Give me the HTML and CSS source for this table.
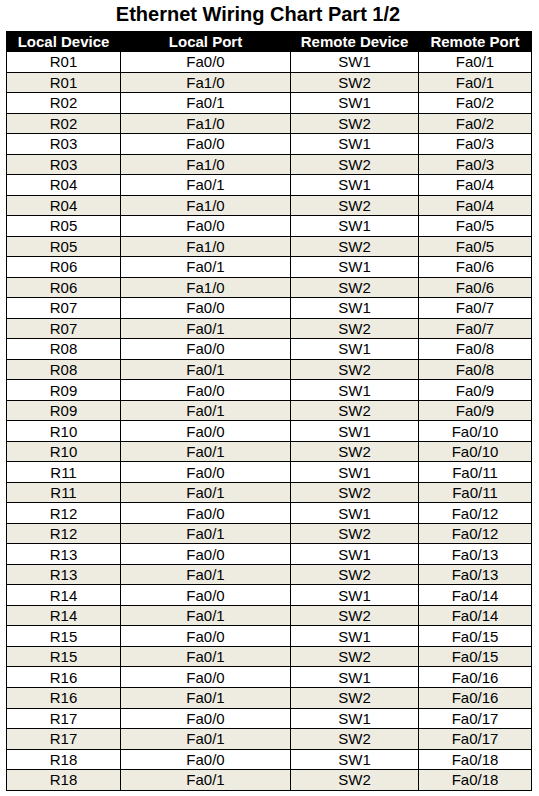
FILE: index.html
```html
<!DOCTYPE html>
<html>
<head>
<meta charset="utf-8">
<title>Ethernet Wiring Chart Part 1/2</title>
<link rel="stylesheet" href="styles.css">
</head>
<body>
<h1 class="title">Ethernet Wiring Chart Part 1/2</h1>
<table class="chart">
<colgroup><col class="c1"><col class="c2"><col class="c3"><col class="c4"></colgroup>
<thead>
<tr><th>Local Device</th><th>Local Port</th><th>Remote Device</th><th>Remote Port</th></tr>
</thead>
<tbody>
<tr><td>R01</td><td>Fa0/0</td><td>SW1</td><td>Fa0/1</td></tr>
<tr><td>R01</td><td>Fa1/0</td><td>SW2</td><td>Fa0/1</td></tr>
<tr><td>R02</td><td>Fa0/1</td><td>SW1</td><td>Fa0/2</td></tr>
<tr><td>R02</td><td>Fa1/0</td><td>SW2</td><td>Fa0/2</td></tr>
<tr><td>R03</td><td>Fa0/0</td><td>SW1</td><td>Fa0/3</td></tr>
<tr><td>R03</td><td>Fa1/0</td><td>SW2</td><td>Fa0/3</td></tr>
<tr><td>R04</td><td>Fa0/1</td><td>SW1</td><td>Fa0/4</td></tr>
<tr><td>R04</td><td>Fa1/0</td><td>SW2</td><td>Fa0/4</td></tr>
<tr><td>R05</td><td>Fa0/0</td><td>SW1</td><td>Fa0/5</td></tr>
<tr><td>R05</td><td>Fa1/0</td><td>SW2</td><td>Fa0/5</td></tr>
<tr><td>R06</td><td>Fa0/1</td><td>SW1</td><td>Fa0/6</td></tr>
<tr><td>R06</td><td>Fa1/0</td><td>SW2</td><td>Fa0/6</td></tr>
<tr><td>R07</td><td>Fa0/0</td><td>SW1</td><td>Fa0/7</td></tr>
<tr><td>R07</td><td>Fa0/1</td><td>SW2</td><td>Fa0/7</td></tr>
<tr><td>R08</td><td>Fa0/0</td><td>SW1</td><td>Fa0/8</td></tr>
<tr><td>R08</td><td>Fa0/1</td><td>SW2</td><td>Fa0/8</td></tr>
<tr><td>R09</td><td>Fa0/0</td><td>SW1</td><td>Fa0/9</td></tr>
<tr><td>R09</td><td>Fa0/1</td><td>SW2</td><td>Fa0/9</td></tr>
<tr><td>R10</td><td>Fa0/0</td><td>SW1</td><td>Fa0/10</td></tr>
<tr><td>R10</td><td>Fa0/1</td><td>SW2</td><td>Fa0/10</td></tr>
<tr><td>R11</td><td>Fa0/0</td><td>SW1</td><td>Fa0/11</td></tr>
<tr><td>R11</td><td>Fa0/1</td><td>SW2</td><td>Fa0/11</td></tr>
<tr><td>R12</td><td>Fa0/0</td><td>SW1</td><td>Fa0/12</td></tr>
<tr><td>R12</td><td>Fa0/1</td><td>SW2</td><td>Fa0/12</td></tr>
<tr><td>R13</td><td>Fa0/0</td><td>SW1</td><td>Fa0/13</td></tr>
<tr><td>R13</td><td>Fa0/1</td><td>SW2</td><td>Fa0/13</td></tr>
<tr><td>R14</td><td>Fa0/0</td><td>SW1</td><td>Fa0/14</td></tr>
<tr><td>R14</td><td>Fa0/1</td><td>SW2</td><td>Fa0/14</td></tr>
<tr><td>R15</td><td>Fa0/0</td><td>SW1</td><td>Fa0/15</td></tr>
<tr><td>R15</td><td>Fa0/1</td><td>SW2</td><td>Fa0/15</td></tr>
<tr><td>R16</td><td>Fa0/0</td><td>SW1</td><td>Fa0/16</td></tr>
<tr><td>R16</td><td>Fa0/1</td><td>SW2</td><td>Fa0/16</td></tr>
<tr><td>R17</td><td>Fa0/0</td><td>SW1</td><td>Fa0/17</td></tr>
<tr><td>R17</td><td>Fa0/1</td><td>SW2</td><td>Fa0/17</td></tr>
<tr><td>R18</td><td>Fa0/0</td><td>SW1</td><td>Fa0/18</td></tr>
<tr><td>R18</td><td>Fa0/1</td><td>SW2</td><td>Fa0/18</td></tr>
</tbody>
</table>
</body>
</html>
```
FILE: styles.css
```css
html, body {
  margin: 0;
  padding: 0;
  background: #ffffff;
}

body {
  font-family: "Liberation Sans", Arial, sans-serif;
  color: #000000;
}

.title {
  margin: 0;
  box-sizing: border-box;
  height: 31px;
  padding: 2px 23px 5px 0;
  font-size: 20px;
  line-height: 24px;
  font-weight: bold;
  text-align: center;
}

.chart {
  margin-left: 6px;
  width: 525px;
  border-collapse: collapse;
  table-layout: fixed;
  font-size: 15px;
}

.c1 { width: 114px; }
.c2 { width: 170px; }
.c3 { width: 128px; }
.c4 { width: 113px; }

.chart th,
.chart td {
  border: 1px solid #000000;
  padding: 0;
  text-align: center;
  line-height: 17px;
  white-space: nowrap;
}

.chart th {
  background: #000000;
  color: #ffffff;
  font-weight: bold;
  height: 19px;
}

.chart td {
  height: 19.53px;
}

.chart tbody tr:nth-child(even) td {
  background: #eeece1;
}
```
